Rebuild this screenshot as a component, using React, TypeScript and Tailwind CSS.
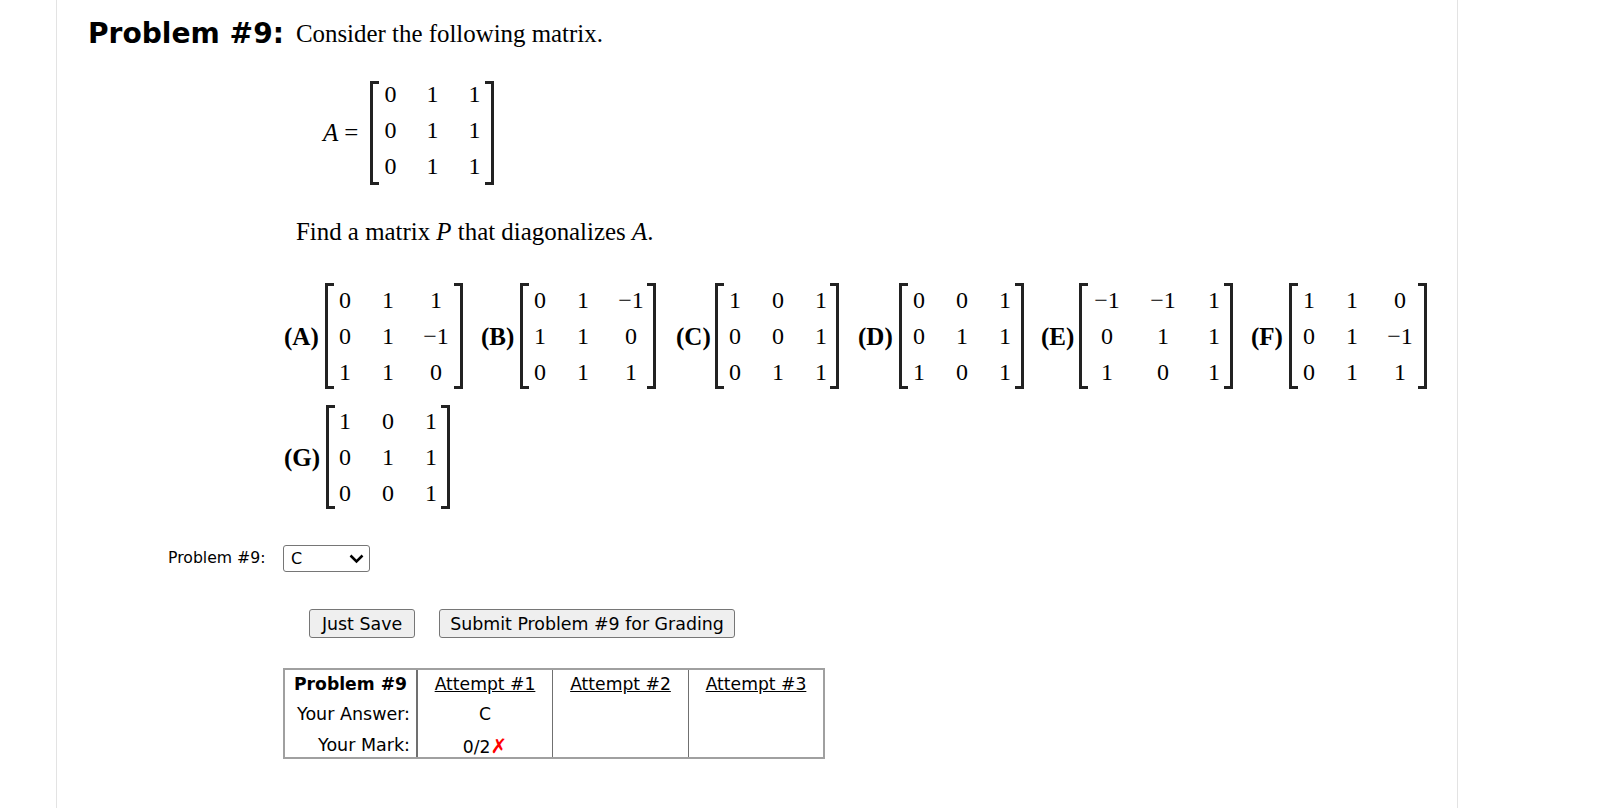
const serif = "font-['Liberation_Serif',serif]";

function Bracket({ side }: { side: "l" | "r" }) {
  return (
    <div
      className={
        side === "l"
          ? "w-[9px] shrink-0 self-stretch border-y-[3px] border-l-[3px] border-[#222]"
          : "w-[9px] shrink-0 self-stretch border-y-[3px] border-r-[3px] border-[#222]"
      }
    />
  );
}

function Matrix({ rows, cols, box }: { rows: string[][]; cols: string; box: string }) {
  return (
    <div className={`flex items-stretch ${box}`}>
      <Bracket side="l" />
      <div className={`grid min-w-0 flex-1 ${cols} grid-rows-[36px_36px_36px] content-center items-center justify-start justify-items-center text-[24px] leading-none`}>
        {rows.flat().map((v, i) => (
          <span key={i} className="whitespace-nowrap">{v}</span>
        ))}
      </div>
      <Bracket side="r" />
    </div>
  );
}

function Option({ label, rows, cols, box, lab }: { label: string; rows: string[][]; cols: string; box: string; lab: string }) {
  return (
    <div className="flex items-center">
      <b className={`${lab} text-[25px] leading-none`}>{label}</b>
      <Matrix rows={rows} cols={cols} box={box} />
    </div>
  );
}

const M = "\u2212";

export default function App() {
  return (
    <div className="h-[808px] overflow-hidden bg-white text-black">
      <div className="ml-[56px] h-[808px] w-[1402px] border-x border-[#e3e3e3] pl-[31px] pt-[17px]">
        <div className="flex items-start gap-[12px]">
          <h1 className="font-['DejaVu_Sans',sans-serif] text-[28.1px] leading-[34px] font-bold">Problem #9:</h1>
          <p className={`${serif} text-[24.9px] leading-[34px]`}>Consider the following matrix.</p>
        </div>

        <div className={`${serif} mt-[30px] ml-[235px] flex items-center text-[25px]`}>
          <span className="italic">A</span>
          <span className="ml-[6px]">=</span>
          <div className="ml-[12px]">
            <Matrix box="h-[104px] w-[124px]" rows={[["0","1","1"],["0","1","1"],["0","1","1"]]} cols="grid-cols-[20px_20px_20px] gap-x-[22px] pl-[1px] pb-[6px]" />
          </div>
        </div>

        <p className={`${serif} mt-[30px] ml-[208px] text-[24.9px] leading-[34px]`}>
          Find a matrix <i>P</i> that diagonalizes <i>A</i>.
        </p>

        <div className={`${serif} mt-[34px] ml-[196px] flex items-center`}>
          <Option lab="w-[41px]" box="h-[106px] w-[138px]" label="(A)" rows={[["0","1","1"],["0","1",M+"1"],["1","1","0"]]} cols="grid-cols-[20px_20px_30px] gap-x-[23px] pl-[1px]" />
          <div className="w-[18px]" />
          <Option lab="w-[39px]" box="h-[106px] w-[136px]" label="(B)" rows={[["0","1",M+"1"],["1","1","0"],["0","1","1"]]} cols="grid-cols-[20px_20px_30px] gap-x-[23px] pl-[1px]" />
          <div className="w-[20px]" />
          <Option lab="w-[39px]" box="h-[106px] w-[124px]" label="(C)" rows={[["1","0","1"],["0","0","1"],["0","1","1"]]} cols="grid-cols-[20px_20px_20px] gap-x-[23px] pl-[1px]" />
          <div className="w-[19px]" />
          <Option lab="w-[41px]" box="h-[106px] w-[125px]" label="(D)" rows={[["0","0","1"],["0","1","1"],["1","0","1"]]} cols="grid-cols-[20px_20px_20px] gap-x-[23px] pl-[1px]" />
          <div className="w-[17px]" />
          <Option lab="w-[38px]" box="h-[106px] w-[154px]" label="(E)" rows={[["\u22121","\u22121","1"],["0","1","1"],["1","0","1"]]} cols="grid-cols-[30px_30px_20px] gap-x-[26px] pl-[4px]" />
          <div className="w-[18px]" />
          <Option lab="w-[38px]" box="h-[106px] w-[138px]" label="(F)" rows={[["1","1","0"],["0","1",M+"1"],["0","1","1"]]} cols="grid-cols-[20px_20px_30px] gap-x-[23px] pl-[1px]" />
        </div>

        <div className={`${serif} mt-[16px] ml-[196px] flex`}>
          <Option lab="w-[42px]" box="h-[104px] w-[124px]" label="(G)" rows={[["1","0","1"],["0","1","1"],["0","0","1"]]} cols="grid-cols-[20px_20px_20px] gap-x-[23px]" />
        </div>

        <div className="font-['DejaVu_Sans',sans-serif]">
          <div className="mt-[36px] ml-[80px] flex items-center gap-[17px]">
            <span className="w-[98px] pb-[2px] text-[15.7px] leading-[24px] whitespace-nowrap">Problem #9:</span>
            <div className="flex h-[27px] w-[87px] items-center justify-between rounded-[3px] border border-[#767676] pt-[1px] pr-[5px] pl-[7px] text-[16px]">
              <span>C</span>
              <svg width="15" height="10" viewBox="0 0 15 10" fill="none" stroke="#000" strokeWidth="2.5">
                <path d="M1.5 1.5 7.5 7.5l6-6" />
              </svg>
            </div>
          </div>

          <div className="mt-[37px] ml-[221px] flex gap-[24px] text-[17.4px]">
            <button className="h-[29px] w-[106px] rounded-[3px] border border-[#767676] bg-[#efefef] pt-[1px]">Just Save</button>
            <button className="h-[29px] w-[296px] rounded-[3px] border border-[#767676] bg-[#efefef] pt-[1px]">Submit Problem #9 for Grading</button>
          </div>

          <div className="mt-[30px] ml-[195px] grid h-[91px] w-[542px] grid-cols-[133px_135px_136px_134px] border-2 border-[#a0a0a0] text-[17.2px] leading-none">
            <div className="grid grid-rows-[30px_30px_27px] items-center border-r-2 border-[#707070] pr-[6px] text-right">
              <b className="pr-[3px]">Problem #9</b>
              <span className="text-[17.5px]">Your Answer:</span>
              <span className="pt-[5px] text-[17.5px]">Your Mark:</span>
            </div>
            <div className="grid grid-rows-[30px_30px_27px] items-center border-r border-[#707070] text-center">
              <span className="underline">Attempt #1</span>
              <span>C</span>
              <span className="pt-[5px]">0/2<span className="text-[20px] leading-none font-bold text-[#f00]">✗</span></span>
            </div>
            <div className="grid grid-rows-[30px_30px_27px] items-center border-r border-[#707070] text-center">
              <span className="underline">Attempt #2</span>
            </div>
            <div className="grid grid-rows-[30px_30px_27px] items-center text-center">
              <span className="underline">Attempt #3</span>
            </div>
          </div>
        </div>
      </div>
    </div>
  );
}
